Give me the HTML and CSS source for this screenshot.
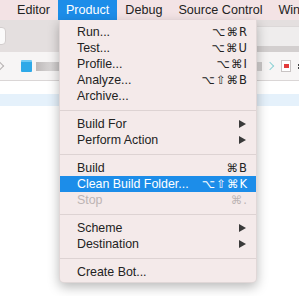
FILE: index.html
```html
<!DOCTYPE html>
<html lang="en">
<head>
  <meta charset="UTF-8" />
  <title>Product menu</title>
  <link rel="stylesheet" href="styles.css">
</head>
<body>
  <!-- menu bar -->
  <div class="menubar">
    <span class="bar-item">Editor</span>
    <span class="bar-item open">Product</span>
    <span class="bar-item">Debug</span>
    <span class="bar-item">Source Control</span>
    <span class="bar-item">Window</span>
  </div>

  <!-- window behind the menu -->
  <div class="toolbar">
    <div class="field"></div>
    <div class="right-part"></div>
  </div>
  <div class="pathbar">
    <div class="path-left">
      <span class="chev grey"></span>
      <span class="folder"></span>
      <span class="blur"></span>
    </div>
    <div class="path-right">
      <span class="blur short"></span>
      <span class="chev teal"></span>
      <span class="doc"><i></i></span>
      <span class="lines"></span>
    </div>
  </div>
  <div class="content">
    <div class="sel-row"></div>
  </div>

  <!-- Product dropdown -->
  <div class="menu">
    <div class="item"><span>Run...</span><span class="key">⌥⌘R</span></div>
    <div class="item"><span>Test...</span><span class="key">⌥⌘U</span></div>
    <div class="item"><span>Profile...</span><span class="key">⌥⌘I</span></div>
    <div class="item"><span>Analyze...</span><span class="key">⌥⇧⌘B</span></div>
    <div class="item"><span>Archive...</span></div>
    <div class="sep"></div>
    <div class="item"><span>Build For</span><span class="arrow"></span></div>
    <div class="item"><span>Perform Action</span><span class="arrow"></span></div>
    <div class="sep"></div>
    <div class="item"><span>Build</span><span class="key">⌘B</span></div>
    <div class="item active"><span>Clean Build Folder...</span><span class="key">⌥⇧⌘K</span></div>
    <div class="item disabled"><span>Stop</span><span class="key">⌘.</span></div>
    <div class="sep"></div>
    <div class="item"><span>Scheme</span><span class="arrow"></span></div>
    <div class="item"><span>Destination</span><span class="arrow"></span></div>
    <div class="sep"></div>
    <div class="item"><span>Create Bot...</span></div>
  </div>
</body>
</html>
```

FILE: styles.css
```css
* {
  margin: 0;
  padding: 0;
  box-sizing: border-box;
  font-family: 'Liberation Sans', Arial, sans-serif;
}
body {
  background-color: #ffffff;
  width: 299px;
  height: 296px;
  overflow: hidden;
  position: relative;
}
.menubar {
  height: 20px;
  display: flex;
  padding-left: 9px;
  background-color: #f3e3e5;
  white-space: nowrap;
  overflow: hidden;
}
.bar-item {
  padding: 0 8px;
  font-size: 12.6px;
  line-height: 20px;
  color: #222;
}
.bar-item.open {
  background-color: #1c8de9;
  color: #fff;
}
.toolbar {
  height: 32px;
  display: flex;
  background-color: #e4dfdf;
}
.field {
  width: 12px;
  height: 18px;
  margin: 7px 0 0 -6px;
  background-color: #fbfafa;
  border: 1px solid #d2cdcd;
  border-radius: 4px;
}
.right-part {
  margin-left: auto;
  width: 42px;
  background-color: #efeded;
  border-top: 1px solid #dcd8d8;
  border-bottom: 6px solid #d3cfcf;
  margin-top: 6px;
}
.pathbar {
  height: 29px;
  display: flex;
  justify-content: space-between;
  align-items: center;
  background-color: #f7f5f5;
  border-bottom: 1px solid #dad6d6;
}
.path-left, .path-right {
  display: flex;
  align-items: center;
  gap: 4px;
}
.path-right {
  margin-right: -3px;
}
.chev {
  width: 6px;
  height: 6px;
  border-top: 1px solid;
  border-right: 1px solid;
  transform: rotate(45deg);
}
.chev.grey {
  color: #b8b4b4;
  margin-left: -3px;
  margin-right: 14px;
}
.chev.teal {
  color: #8fd3d6;
  margin-right: 4px;
}
.folder {
  width: 11px;
  height: 12px;
  background-color: #2ea9e8;
  border-radius: 1px;
  border-top: 2px solid #6fcaf4;
}
.blur {
  width: 24px;
  height: 9px;
  background: linear-gradient(90deg, #bdb9b9, #d7d4d4 60%, #c9c6c6);
}
.blur.short {
  width: 12px;
  margin-right: 1px;
}
.doc {
  width: 10px;
  height: 12px;
  background-color: #fff;
  border: 1px solid #c9c4c4;
  position: relative;
}
.doc i {
  position: absolute;
  left: 2px;
  top: 3px;
  width: 5px;
  height: 4px;
  background-color: #e33a3a;
}
.lines {
  width: 4px;
  height: 5px;
  border-top: 2px solid #444;
  border-bottom: 2px solid #444;
  margin-left: 3px;
}
.content {
  padding-top: 13px;
}
.sel-row {
  height: 12px;
  background-color: #e5f1fb;
}
.menu {
  position: absolute;
  left: 59px;
  top: 20px;
  width: 198px;
  padding: 4px 0 2px;
  background-color: #f4eaea;
  border: 1px solid rgba(0, 0, 0, 0.08);
  border-top: none;
  border-radius: 0 0 5px 5px;
  box-shadow: 0 4px 12px rgba(0, 0, 0, 0.28);
}
.item {
  height: 16px;
  display: flex;
  justify-content: space-between;
  align-items: center;
  padding: 0 8px 0 17px;
  font-size: 12.4px;
  color: #222;
  white-space: nowrap;
}
.item.active {
  background-color: #1c8de9;
  color: #fff;
}
.item.disabled {
  color: #bcb4b4;
}
.key {
  letter-spacing: 1px;
  font-family: 'DejaVu Sans', sans-serif;
  font-size: 11.5px;
}
.arrow {
  width: 0;
  height: 0;
  margin-right: 2px;
  border-left: 7px solid #3a3a3a;
  border-top: 4px solid transparent;
  border-bottom: 4px solid transparent;
}
.sep {
  height: 12px;
  display: flex;
  align-items: center;
}
.sep::after {
  content: '';
  flex: 1;
  height: 1px;
  background-color: #ddd3d3;
}
```
